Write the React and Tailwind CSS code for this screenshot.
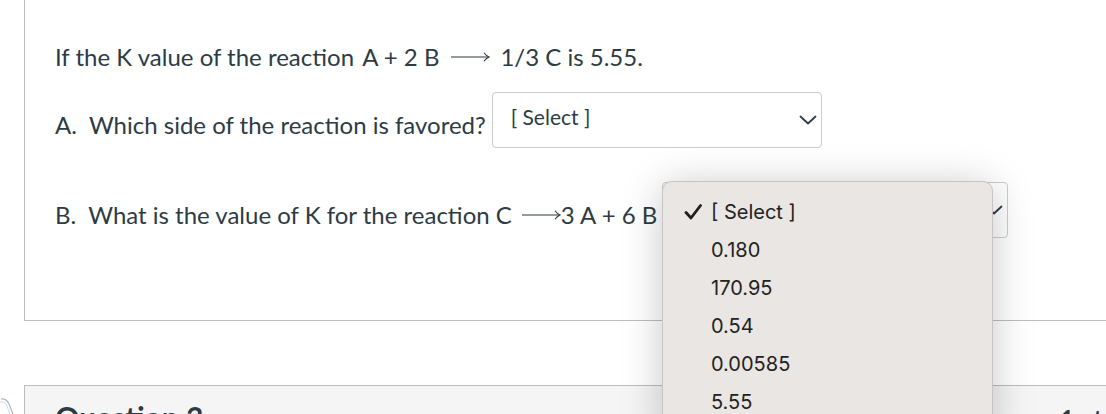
function LongArrow({ className }) {
  return (
    <svg className={className} width="40" height="12" viewBox="0 0 40 12" fill="none">
      <path d="M1 6H38.5" stroke="#2d3b45" strokeWidth="1.2" />
      <path d="M34 1.8Q36 4.6 39 6Q36 7.4 34 10.2" stroke="#2d3b45" strokeWidth="1.1" />
    </svg>
  )
}

function Chevron() {
  return (
    <svg width="18" height="10" viewBox="0 0 18 10" fill="none">
      <path d="M1.5 1.5L9 8.5L16.5 1.5" stroke="#2d3b45" strokeWidth="1.8" strokeLinecap="round" strokeLinejoin="round" />
    </svg>
  )
}

function CheckMark() {
  return (
    <svg width="18" height="18" viewBox="0 0 18 18" fill="none">
      <path d="M2 9.5L7 15L16.5 2.5" stroke="#1f1f1f" strokeWidth="2.8" strokeLinecap="round" strokeLinejoin="round" />
    </svg>
  )
}

function Select({ className }) {
  return (
    <div
      className={`flex h-[56px] shrink-0 items-center justify-between rounded-[4px] border border-[#c7cdd1] bg-white pl-[18px] pr-[4px] ${className}`}
    >
      <span className="-mt-[6px] text-[21px]">[ Select ]</span>
      <Chevron />
    </div>
  )
}

const options = ['[ Select ]', '0.180', '170.95', '0.54', '0.00585', '5.55']

export default function App() {
  return (
    <div className="relative h-[414px] w-[1106px] overflow-hidden bg-white font-['Lato',sans-serif] text-[24px] text-[#2d3b45]">
      <div className="ml-6 h-[321px] w-[1100px] border-b border-l border-[#bdbdbd] pl-[30px] pt-[44px]">
        <p className="flex h-[26px] items-center whitespace-pre leading-[26px]">
          <span>If the K value of the reaction </span>
          <span className="ml-[2px]">A + 2 B</span>
          <LongArrow className="ml-[11px] mr-[10px]" />
          <span>1/3 C is 5.55.</span>
        </p>

        <div className="mt-[22px] flex items-center">
          <span className="whitespace-pre pt-[10px]">A.  Which side of the reaction is favored?</span>
          <Select className="ml-[6px] w-[330px]" />
        </div>

        <div className="mt-[34px] flex items-center">
          <span className="whitespace-pre pt-[10px]">B.  What is the value of K for the reaction C</span>
          <LongArrow className="ml-[9px] mt-[10px]" />
          <span className="whitespace-pre pt-[10px]">3 A + 6 B</span>
          <Select className="ml-[5px] w-[346px]" />
        </div>
      </div>

      <div className="ml-6 mt-[64px] flex h-[80px] w-[1100px] items-start justify-between border-l border-t border-[#bdbdbd] bg-[#f5f5f5] pl-[30px] pt-[16px]">
        <span className="text-[30px] font-bold leading-[30px] text-[#2d3b45]">Question 3</span>
        <span className="mr-[11px] pt-[4px] text-[24px] font-bold leading-[26px] text-[#2d3b45]">1 pts</span>
      </div>

      <svg className="absolute left-0 top-[396px]" width="16" height="18" viewBox="0 0 16 18" fill="none">
        <path d="M1 3Q6 2 9 8L13 18" stroke="#a9b8c8" strokeWidth="1.2" />
        <path d="M0 6Q5 5 7 10L10 18" stroke="#cfd8e2" strokeWidth="1" />
      </svg>

      <div className="absolute left-[662px] top-[181px] h-[260px] w-[331px] rounded-t-[10px] border border-[#c9c4c2] bg-[#eae6e3] pt-[11px] shadow-[0_4px_40px_rgba(0,0,0,0.22)] font-['Inter',sans-serif] text-[20px] text-[#222222]">
        {options.map((o, i) => (
          <div key={o} className="flex h-[38px] items-center">
            <span className="flex w-[48px] justify-end pr-[9px]">{i === 0 && <CheckMark />}</span>
            <span>{o}</span>
          </div>
        ))}
      </div>
    </div>
  )
}
